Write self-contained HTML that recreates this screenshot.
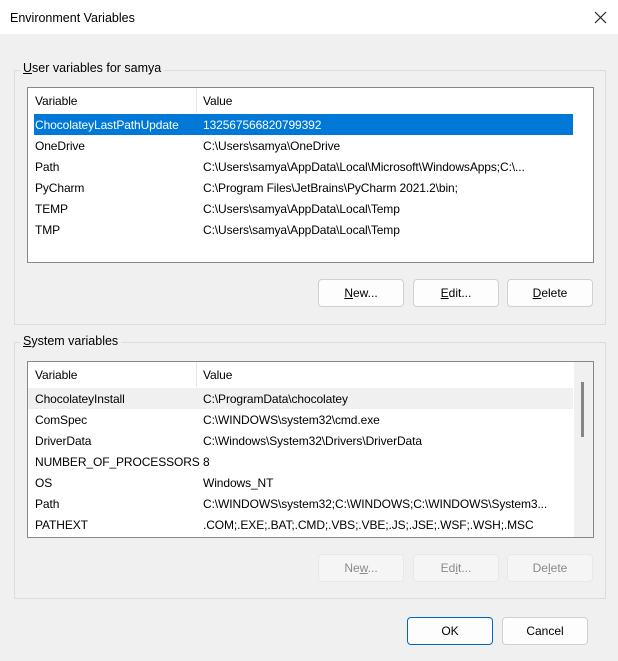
<!DOCTYPE html>
<html><head><style>
*{box-sizing:border-box;margin:0;padding:0}
body{width:618px;height:661px;background:#f0f0f0;font-family:"Segoe UI","Liberation Sans",sans-serif;font-size:12px;color:#000;position:relative;overflow:hidden}
.a{position:absolute}
.title{left:0;top:0;width:618px;height:34px;background:#fff}
.grp{border:1px solid #dcdcdc}
.lbl{background:#f0f0f0;padding:0 3px;font-size:12.5px}
.lv{background:#fff;border:1px solid #828790;overflow:hidden}
.row{position:absolute;left:0;height:21px;line-height:22px;width:545px;white-space:nowrap;font-size:12px;letter-spacing:-0.1px}
.row span{position:absolute}
.c1{left:7px}.c2{left:175px}
.btn{background:#fdfdfd;border:1px solid #d0d0d0;border-radius:4px;text-align:center;line-height:27px;font-size:12px}
.dis{background:#f5f5f5;border-color:#e8e8e8;color:#8a8a8a}
u{text-decoration:underline}
</style></head><body>
<div class="a title"></div>
<div class="a" style="left:10px;top:11px;font-size:12.5px">Environment Variables</div>
<svg class="a" style="left:594px;top:11px" width="13" height="13"><path d="M1 1L12 12M12 1L1 12" stroke="#222" stroke-width="1.2"/></svg>

<div class="a grp" style="left:14px;top:70px;width:592px;height:255px"></div>
<div class="a lbl" style="left:20px;top:61px"><u>U</u>ser variables for samya</div>
<div class="a lv" style="left:27px;top:87px;width:567px;height:176px">
 <div class="row" style="top:0;height:25px;line-height:27px"><span class="c1">Variable</span><span style="left:168px;top:0;width:1px;height:25px;background:#e5e5e5"></span><span class="c2">Value</span></div>
 <div class="row" style="top:26px;left:6px;width:539px;background:#0078d7;color:#fff"><span style="left:1px">ChocolateyLastPathUpdate</span><span style="left:169px">132567566820799392</span></div>
 <div class="row" style="top:47px"><span class="c1">OneDrive</span><span class="c2">C:\Users\samya\OneDrive</span></div>
 <div class="row" style="top:68px"><span class="c1">Path</span><span class="c2">C:\Users\samya\AppData\Local\Microsoft\WindowsApps;C:\...</span></div>
 <div class="row" style="top:89px"><span class="c1">PyCharm</span><span class="c2">C:\Program Files\JetBrains\PyCharm 2021.2\bin;</span></div>
 <div class="row" style="top:110px"><span class="c1">TEMP</span><span class="c2">C:\Users\samya\AppData\Local\Temp</span></div>
 <div class="row" style="top:131px"><span class="c1">TMP</span><span class="c2">C:\Users\samya\AppData\Local\Temp</span></div>
</div>
<div class="a btn" style="left:318px;top:279px;width:86px;height:28px"><u>N</u>ew...</div>
<div class="a btn" style="left:413px;top:279px;width:86px;height:28px"><u>E</u>dit...</div>
<div class="a btn" style="left:507px;top:279px;width:86px;height:28px"><u>D</u>elete</div>

<div class="a grp" style="left:14px;top:342px;width:592px;height:257px"></div>
<div class="a lbl" style="left:20px;top:334px"><u>S</u>ystem variables</div>
<div class="a lv" style="left:27px;top:361px;width:567px;height:177px">
 <div class="row" style="top:0;height:25px;line-height:27px"><span class="c1">Variable</span><span style="left:168px;top:0;width:1px;height:25px;background:#e5e5e5"></span><span class="c2">Value</span></div>
 <div class="row" style="top:26px;background:#f0f0f0"><span class="c1">ChocolateyInstall</span><span class="c2">C:\ProgramData\chocolatey</span></div>
 <div class="row" style="top:47px"><span class="c1">ComSpec</span><span class="c2">C:\WINDOWS\system32\cmd.exe</span></div>
 <div class="row" style="top:68px"><span class="c1">DriverData</span><span class="c2">C:\Windows\System32\Drivers\DriverData</span></div>
 <div class="row" style="top:89px"><span class="c1">NUMBER_OF_PROCESSORS</span><span class="c2">8</span></div>
 <div class="row" style="top:110px"><span class="c1">OS</span><span class="c2">Windows_NT</span></div>
 <div class="row" style="top:131px"><span class="c1">Path</span><span class="c2">C:\WINDOWS\system32;C:\WINDOWS;C:\WINDOWS\System3...</span></div>
 <div class="row" style="top:152px"><span class="c1">PATHEXT</span><span class="c2">.COM;.EXE;.BAT;.CMD;.VBS;.VBE;.JS;.JSE;.WSF;.WSH;.MSC</span></div>
 <div class="a" style="left:546px;top:0;width:19px;height:177px;background:#f0f0f0"></div>
 <div class="a" style="left:553px;top:20px;width:3px;height:55px;background:#868686"></div>
</div>
<div class="a btn dis" style="left:318px;top:554px;width:86px;height:28px">Ne<u>w</u>...</div>
<div class="a btn dis" style="left:413px;top:554px;width:86px;height:28px">Ed<u>i</u>t...</div>
<div class="a btn dis" style="left:507px;top:554px;width:86px;height:28px">De<u>l</u>ete</div>

<div class="a btn" style="left:407px;top:617px;width:86px;height:28px;border:1px solid #0067c0">OK</div>
<div class="a btn" style="left:502px;top:617px;width:86px;height:28px">Cancel</div>
</body></html>
